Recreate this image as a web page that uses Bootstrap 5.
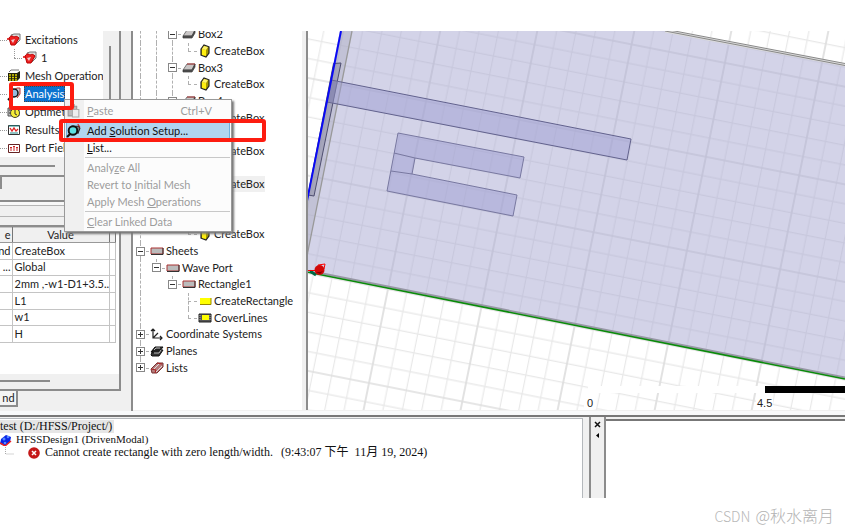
<!DOCTYPE html>
<html lang="en">
<head>
<meta charset="utf-8">
<meta name="viewport" content="width=device-width, initial-scale=1">
<title>HFSS Project</title>
<link href="https://cdn.jsdelivr.net/npm/bootstrap@5.3.0/dist/css/bootstrap.min.css" rel="stylesheet">
<style>
body{font-family:Lato,"Noto Sans CJK SC",sans-serif;font-size:11px;line-height:16px;color:#222;background:#fff;padding-top:31px;overflow-x:hidden}
ul{list-style:none;margin:0;padding:0}
.workspace{background:#f0f0f0;height:380px}
.side{width:133px;border-right:2px solid #8c8c8c;flex:none}
.side-top{height:171px;width:121px;border-right:2px solid #8c8c8c;border-bottom:2px solid #8c8c8c}
.project{height:126px}
.project ul{width:103px;background:#fff;overflow:hidden;height:100%;display:flex;flex-direction:column}
.project li,.model li{flex:1 1 0;min-height:0;display:flex;align-items:center;white-space:nowrap}
.project li a,.model li a{color:#222;text-decoration:none;padding:0 1px;line-height:16px}
.project li svg{width:14px;height:14px;flex:none;margin:0 3px 0 7px}
.project li.sub svg{margin-left:23px}
.project li{position:relative}
.project li::before{content:"";position:absolute;left:0;width:7px;top:50%;border-top:1px dotted #999}
.project li.sub::before{left:14px;width:8px}
.project li.sub::after{content:"";position:absolute;left:14px;top:0;height:50%;border-left:1px dotted #999}
.project li a.chosen{background:#0a72cf;color:#fff;outline:1px dotted #444;outline-offset:-1px}
.vthumb{width:2px;background:#8c8c8c;margin:15px 0 0 6px}
.hthumb{height:2px;background:#8c8c8c;width:55px;margin-top:8px}
.sheet-tab{height:14px;margin-top:8px;border-left:2px solid #8c8c8c;border-top:2px solid #8c8c8c}
.dock{height:23px;width:121px;border-right:2px solid #8c8c8c;background:linear-gradient(#f8f8f8 3px,#b5b5b5 3px,#b5b5b5 4px,#f0f0f0 4px,#f0f0f0 14px,#b5b5b5 14px,#b5b5b5 15px,#f0f0f0 15px)}
.props{width:121px;height:166px;border:solid #8c8c8c;border-width:2px 2px 2px 0;background:#fff;display:flex;flex-direction:column}
.props table{width:116px;height:116px;table-layout:fixed;border-collapse:collapse;line-height:14px;white-space:nowrap}
.props td,.props th{border:1px solid #c4c4c4;padding:0 2px;overflow:hidden;font-weight:400}
.props th{background:#f0f0f0;text-align:center;border-right:1px solid #777;border-bottom-color:#999}
.props th:first-child,.props td:first-child{border-left:0;text-align:right;padding:0 1px 0 0;direction:rtl}
.hbar{height:15px;background:#f0f0f0;margin-top:auto;padding-top:6px}
.hbar i{display:block;width:50px;height:2px;background:#8c8c8c}
.cmd-tab{width:18px;height:16px;line-height:14px;border:solid #8c8c8c;border-width:0 2px 2px 0;background:#f4f4f4;padding:0 0 0 1px;color:#222}
.model{width:175px;flex:none;background:linear-gradient(90deg,#fff 169px,#f0f0f0 169px);overflow:hidden;border-right:2px solid #8c8c8c;margin-bottom:1px}
.model ul{height:350px;margin-top:-5px;display:flex;flex-direction:column}
.cell{width:16px;flex:none;align-self:stretch;position:relative}
.line::before,.joint::before,.elbow::before{content:"";position:absolute;left:7px;top:0;bottom:0;border-left:1px dashed #b0b0b0}
.elbow::before{bottom:50%}
.joint::after,.elbow::after{content:"";position:absolute;left:7px;right:0;top:50%;border-top:1px dashed #b0b0b0}
.toggle{position:absolute;left:3px;top:4px;width:9px;height:9px;border:1px solid #888;background:#fff;padding:0;z-index:1}
.toggle::before{content:"";position:absolute;left:1px;right:1px;top:3px;height:1px;background:#333}
.toggle.plus::after{content:"";position:absolute;top:1px;bottom:1px;left:3px;width:1px;background:#333}
.model li svg{width:14px;height:14px;flex:none;margin:0 1px}
.model li a.soft{background:#f0f0f0}
.canvas3d{background:#fff;margin-bottom:1px;min-width:0}
.canvas3d svg{inset:0;width:100%;height:100%}
.menu{left:64px;top:68px;width:168px;background:linear-gradient(90deg,#f0f0f0 19px,#fcfcfc 19px);border:1px solid #999;box-shadow:2px 2px 2px #777;padding:2px 1px 1px;z-index:3}
.menu button{display:flex;width:100%;height:17px;border:0;background:none;padding:0 18px 0 21px;line-height:17px;color:#111;position:relative;white-space:nowrap}
.menu button:disabled{color:#9c9c9c}
.menu button.hot{margin-top:3px;background:#b0d5f0;box-shadow:inset 0 0 0 1px #6fb0dd}
.menu svg{position:absolute;left:0;top:1px;width:15px;height:15px}
.menu hr{margin:1px 0 1px 19px;border-top:1px solid #c8c8c8;opacity:1}
.callout{border:4px solid #fd1c10;border-radius:3px;z-index:4;pointer-events:none}
.mark-a{left:9px;top:51px;width:65px;height:28px}
.mark-b{left:59px;top:88px;width:207px;height:23px}
.messages{height:83px;background:#f0f0f0;border-top:2px solid #777;font-family:"Liberation Serif","Noto Sans CJK SC",serif;color:#111}
.log{flex:0 0 583px;background:#fff;border:solid #b4b8bc;border-width:1px 1px 0 0;margin-top:1px;font-size:12px;line-height:13px;padding-top:1px}
.log span{white-space:pre}
.log .design{font-size:11px}
.log .root{background:#e6e6e6;padding-right:2px;display:inline-block}
.log svg{width:12px;height:12px;flex:none}
.log .error{margin-left:12px;margin-right:5px}
.grip{width:23px;flex:none;border-right:2px solid #8c8c8c;padding-left:6px}
.grip div{border-left:2px solid #8c8c8c;height:100%;padding-left:1px}
.grip button{display:block;border:0;background:none;padding:0;width:11px;height:11px;line-height:0}
.grip svg{width:7px;height:7px}
.progress-pane{border-top:2px solid #777;margin-top:2px;background:#fff}
.credit{font:300 16px/24px "Noto Sans CJK SC",sans-serif;color:#b2b2b2;padding:5px 11px 0 0}
.credit span{color:#b8b8b8;font-size:14px;margin-right:5px}
</style>
</head>
<body>
<svg width="0" height="0" class="position-absolute">
<defs>
<symbol id="box" viewBox="0 0 14 14"><path d="M1 9 5 3h8l-3 6z" fill="#c9c6c6" stroke="#777"/><path d="M1 9v2h9l3-5V3l-3 6z" fill="#555" stroke="#333" stroke-width=".7"/><path d="M5 3h8" stroke="#a33"/></symbol>
<symbol id="make" viewBox="0 0 14 14"><path d="M3 5 6 1l5 2v6l-3 4-5-2z" fill="#a59800" stroke="#222" stroke-width="1.200"/><path d="m4 5 4 1v6l-4-1z" fill="#ffef10"/><path d="m4 5 2-3 4 1-2 3z" fill="#fff36a"/></symbol>
<symbol id="sheet" viewBox="0 0 14 14"><path d="M1 4h12v6H1z" fill="#bbb" stroke="#a33"/><path d="M1 10.500h12V4" fill="none" stroke="#333"/></symbol>
<symbol id="rect" viewBox="0 0 14 14"><path d="M2 4h11v6H2z" fill="#ff0"/><path d="M2 10.500h11V4" fill="none" stroke="#998800"/></symbol>
<symbol id="cover" viewBox="0 0 14 14"><path d="M1 3h12v8H1z" fill="#555" stroke="#222"/><path d="M4 4h7v5H4z" fill="#ff0"/><path d="M2 4v6M12 4v6" stroke="#aaa" stroke-dasharray="1 1"/></symbol>
<symbol id="axes" viewBox="0 0 14 14"><path d="M3 2v9h9M3 11l5-5M1 4l2-2 2 2M10 9l2 2-2 2" fill="none" stroke="#222" stroke-width="1.200"/></symbol>
<symbol id="planes" viewBox="0 0 14 14"><path d="m1 8 4-5h8L9 8zM1 11l2-5h10l-4 6H2z" fill="#333" stroke="#111"/><path d="m4 6 2-2h4M4 9h5l2-3" stroke="#bbb" fill="none"/></symbol>
<symbol id="lists" viewBox="0 0 14 14"><path d="m1 8 6-6h6v4l-6 6H2z" fill="#b67c7c" stroke="#733"/><path d="m3 9 6-6M6 11l6-6" stroke="#ddd"/><path d="m1 8 5 1-1 3M7 2l5 1" stroke="#a22" fill="none"/></symbol>
<symbol id="excite" viewBox="0 0 14 14"><path d="m4 2 3-1h6v6l-4 4-4-2z" fill="#ddd" stroke="#777"/><path d="M0 6h4" stroke="#d00" stroke-width="1.500"/><path d="M2 5c2-3 4-2 5-1 2-1 3-1 5 1l-4 7H4z" fill="#e22" stroke="#b00"/><path d="m4 7 4-1-2 4z" fill="#ecc"/></symbol>
<symbol id="mesh" viewBox="0 0 14 14"><path d="M1 4h9l3-2v7l-3 3H1z" fill="#221"/><path d="M2 6h2m1 0h2m1 0h2M2 8.500h2m1 0h2m1 0h2M2 11h2m1 0h2m1 0h2" stroke="#dcd000" stroke-width="1.500"/><path d="m2 3 2-2h8" stroke="#777" fill="none"/></symbol>
<symbol id="solve" viewBox="0 0 14 14"><path d="m7 3 3-2h3v6l-3 4" fill="#ccc" stroke="#b33"/><circle cx="7" cy="6" r="4" fill="#9bd" stroke="#111" stroke-width="1.500"/><path d="m1 13 4-4" stroke="#111" stroke-width="2"/></symbol>
<symbol id="setup" viewBox="0 0 14 14"><path d="M5 3h7l1 2-2 5" fill="#777" stroke="#222"/><circle cx="6.500" cy="7" r="4" fill="#5de1e4" stroke="#111" stroke-width="1.800"/><path d="m1 13 3-3" stroke="#111" stroke-width="2"/><path d="m11 1 2 3" stroke="#b22"/></symbol>
<symbol id="optim" viewBox="0 0 14 14"><path d="M1 3h11v8H1z" fill="#bbb" stroke="#555"/><circle cx="8" cy="8" r="4.500" fill="#f5ed39" stroke="#443"/><path d="M8 5v4l2 1M2 5h3M2 8h1" stroke="#333" fill="none"/></symbol>
<symbol id="results" viewBox="0 0 14 14"><path d="M1.500 2.500h11v9h-11z" fill="#fff" stroke="#333"/><path d="m3 5 2 3 2-3 2 3 2-2" fill="none" stroke="#d22" stroke-width="1.300"/><path d="M2 3h10M3 10h8" stroke="#288"/></symbol>
<symbol id="port" viewBox="0 0 14 14"><path d="M1.500 3.500h11v8h-11z" fill="#fff" stroke="#622"/><path d="M4 10V6m3 4V5m3 5V6M3 7l1-1 1 1m1-1 1-1 1 1m1 1 1-1 1 1" stroke="#c22" fill="none"/></symbol>
</defs>
</svg>

<main class="position-relative">
<div class="workspace d-flex">
  <aside class="side">
    <div class="side-top">
      <div class="project d-flex">
        <ul>
          <li><svg><use href="#excite"/></svg><a href="#">Excitations</a></li>
          <li class="sub"><svg><use href="#excite"/></svg><a href="#">1</a></li>
          <li><svg><use href="#mesh"/></svg><a href="#">Mesh Operations</a></li>
          <li><svg><use href="#solve"/></svg><a href="#" class="chosen">Analysis</a></li>
          <li><svg><use href="#optim"/></svg><a href="#">Optimetrics</a></li>
          <li><svg><use href="#results"/></svg><a href="#">Results</a></li>
          <li><svg><use href="#port"/></svg><a href="#">Port Field</a></li>
        </ul>
        <div class="vthumb"></div>
      </div>
      <div class="hthumb"></div>
      <div class="sheet-tab"></div>
    </div>
    <div class="dock"></div>
    <div class="props">
      <table>
        <colgroup><col style="width:12px"><col style="width:97px"><col></colgroup>
        <thead><tr><th>e</th><th>Value</th><th></th></tr></thead>
        <tbody>
          <tr><td>nd</td><td>CreateBox</td><td></td></tr>
          <tr><td>...</td><td>Global</td><td></td></tr>
          <tr><td></td><td>2mm ,-w1-D1+3.5...</td><td></td></tr>
          <tr><td></td><td>L1</td><td></td></tr>
          <tr><td></td><td>w1</td><td></td></tr>
          <tr><td></td><td>H</td><td></td></tr>
        </tbody>
      </table>
      <div class="hbar"><i></i></div>
    </div>
    <button type="button" class="cmd-tab d-block">nd</button>
  </aside>

  <nav class="model" aria-label="Model tree">
    <ul>
      <li><span class="cell line"></span><span class="cell line"></span><span class="cell joint"><button class="toggle" aria-label="Collapse"></button></span><svg><use href="#box"/></svg><a href="#">Box2</a></li>
      <li><span class="cell line"></span><span class="cell line"></span><span class="cell line"></span><span class="cell elbow"></span><svg><use href="#make"/></svg><a href="#">CreateBox</a></li>
      <li><span class="cell line"></span><span class="cell line"></span><span class="cell joint"><button class="toggle" aria-label="Collapse"></button></span><svg><use href="#box"/></svg><a href="#">Box3</a></li>
      <li><span class="cell line"></span><span class="cell line"></span><span class="cell line"></span><span class="cell elbow"></span><svg><use href="#make"/></svg><a href="#">CreateBox</a></li>
      <li><span class="cell line"></span><span class="cell line"></span><span class="cell joint"><button class="toggle" aria-label="Collapse"></button></span><svg><use href="#box"/></svg><a href="#">Box4</a></li>
      <li><span class="cell line"></span><span class="cell line"></span><span class="cell line"></span><span class="cell elbow"></span><svg><use href="#make"/></svg><a href="#">CreateBox</a></li>
      <li><span class="cell line"></span></li>
      <li><span class="cell line"></span><span class="cell line"></span><span class="cell line"></span><span class="cell elbow"></span><svg><use href="#make"/></svg><a href="#">CreateBox</a></li>
      <li><span class="cell line"></span></li>
      <li><span class="cell line"></span><span class="cell line"></span><span class="cell line"></span><span class="cell elbow"></span><svg><use href="#make"/></svg><a href="#" class="soft">CreateBox</a></li>
      <li><span class="cell line"></span></li>
      <li><span class="cell line"></span></li>
      <li><span class="cell line"></span><span class="cell"></span><span class="cell"></span><span class="cell elbow"></span><svg><use href="#make"/></svg><a href="#">CreateBox</a></li>
      <li><span class="cell joint"><button class="toggle" aria-label="Collapse"></button></span><svg><use href="#sheet"/></svg><a href="#">Sheets</a></li>
      <li><span class="cell line"></span><span class="cell elbow"><button class="toggle" aria-label="Collapse"></button></span><svg><use href="#sheet"/></svg><a href="#">Wave Port</a></li>
      <li><span class="cell line"></span><span class="cell"></span><span class="cell elbow"><button class="toggle" aria-label="Collapse"></button></span><svg><use href="#sheet"/></svg><a href="#">Rectangle1</a></li>
      <li><span class="cell line"></span><span class="cell"></span><span class="cell"></span><span class="cell joint"></span><svg><use href="#rect"/></svg><a href="#">CreateRectangle</a></li>
      <li><span class="cell line"></span><span class="cell"></span><span class="cell"></span><span class="cell elbow"></span><svg><use href="#cover"/></svg><a href="#">CoverLines</a></li>
      <li><span class="cell joint"><button class="toggle plus" aria-label="Expand"></button></span><svg><use href="#axes"/></svg><a href="#">Coordinate Systems</a></li>
      <li><span class="cell joint"><button class="toggle plus" aria-label="Expand"></button></span><svg><use href="#planes"/></svg><a href="#">Planes</a></li>
      <li><span class="cell elbow"><button class="toggle plus" aria-label="Expand"></button></span><svg><use href="#lists"/></svg><a href="#">Lists</a></li>
    </ul>
  </nav>

  <section class="canvas3d flex-grow-1 position-relative">
    <svg class="position-absolute" viewBox="308 31 537 379" preserveAspectRatio="xMinYMin slice">
      <defs>
        <pattern id="grid" width="100" height="100" patternUnits="userSpaceOnUse" patternTransform="matrix(.933 .185 -.19 .939 369 383)">
          <path d="M20 0v100M40 0v100M60 0v100M80 0v100M0 20h100M0 40h100M0 60h100M0 80h100" stroke="#e8e8e8" stroke-width="1.200"/>
          <path d="M0 0v100M100 0v100M0 0h100M0 100h100" stroke="#dedede" stroke-width="1.800"/>
        </pattern>
      </defs>
      <path d="M307 31h538v379H307z" fill="url(#grid)"/>
      <path d="M340 31h325l180 34v314L307 272v-71z" fill="#a7a7d1" fill-opacity=".5"/>
      <path d="M340 31h12l-45 225v-55z" fill="#aaaabb" fill-opacity=".4"/>
      <path d="m352 31-45 225" stroke="#999" stroke-width="1.300"/>
      <path d="m333.500 63.500 7.500-.5-27 133-6-1z" fill="#88889f" fill-opacity=".5" stroke="#4e4e70"/>
      <path d="m331 80 300 59-4 21-300-58z" fill="#9d9dd2" fill-opacity=".5" stroke="#62628d"/>
      <path d="m331 80 7 1-5 22-6-1z" fill="#77779f" fill-opacity=".5"/>
      <path d="m398 133 126 24-4 21-105-20-3 16 105 21-4 21-126-25zM394 153l21 5M391 171l21 3" fill="#9d9dd2" fill-opacity=".5" stroke="#7878a0"/>
      <path d="m341 31-34 170" stroke="#0808f5" stroke-width="2"/>
      <path d="m665 31 180 34" stroke="#ddd" stroke-width="3"/>
      <path d="m665 31 180 34.500M672 30.500l173 33" stroke="#888"/>
      <path d="m320 273 525 104.500" stroke="#9797a5" stroke-width="2"/>
      <path d="m307 272 538 107" stroke="#0a8a0a" stroke-width="1.600"/>
      <path d="m310 271 6 4" stroke="#064" stroke-width="3"/>
      <path d="M307 270.500h9M318 265l7-1-1 5" stroke="#f00" fill="none"/>
      <circle cx="319.500" cy="270" r="5" fill="#d10808"/><path d="m316 272 4 2 3-3-3 1z" fill="#800"/>
      <path d="M588 386h177v7H588z" fill="#fff"/><path d="M584 397h12v12h-12zM756 397h17v12h-17z" fill="#fff"/>
      <path d="M765 386h80v7h-80z"/>
      <g font-family="Liberation Sans,sans-serif" font-size="11" fill="#222"><text x="587" y="407">0</text><text x="757" y="407">4.5</text></g>
    </svg>
  </section>
</div>

<div class="menu position-absolute" role="menu">
  <button type="button" disabled><svg viewBox="0 0 14 14"><path d="M2 3h8v9H2z" fill="#bbb" stroke="#999"/><path d="M4 1h4v3H4z" fill="#888"/><path d="M6 6h6v7H6z" fill="#eee" stroke="#aaa"/></svg><span><u>P</u>aste</span><span class="ms-auto">Ctrl+V</span></button>
  <button type="button" class="hot"><svg><use href="#setup"/></svg><span>Add <u>S</u>olution Setup...</span></button>
  <button type="button"><span><u>L</u>ist...</span></button>
  <hr>
  <button type="button" disabled><span>Analy<u>z</u>e All</span></button>
  <button type="button" disabled><span>Revert to <u>I</u>nitial Mesh</span></button>
  <button type="button" disabled><span>Apply Mesh <u>O</u>perations</span></button>
  <hr>
  <button type="button" disabled><span><u>C</u>lear Linked Data</span></button>
</div>
<div class="callout mark-a position-absolute"></div>
<div class="callout mark-b position-absolute"></div>

<div class="bg-light pt-1"></div>
<div class="messages d-flex">
  <div class="log">
    <div><span class="root">test (D:/HFSS/Project/)</span></div>
    <div class="d-flex align-items-center"><svg viewBox="0 0 12 12"><path d="m1 5 5-4 5 2-1 5-5 4-5-2z" fill="#0825e8"/><path d="m0 9 5 3 6-5" stroke="#e22" stroke-width="1.500" fill="none"/><circle cx="4" cy="5" r="1.500" fill="#58f"/><circle cx="8" cy="3" r="1.300" fill="#58f"/><circle cx="5" cy="9" r="1.300" fill="#58f"/></svg><span class="ms-1 design">HFSSDesign1 (DrivenModal)</span></div>
    <div class="d-flex align-items-center"><svg viewBox="0 0 12 12" class="ms-1"><path d="M1.500 0v7H10" fill="none" stroke="#aaa" stroke-dasharray="1 1"/></svg><svg viewBox="0 0 12 12" class="error"><circle cx="6" cy="6" r="5.800" fill="#c41818"/><path d="m4 4 4 4m0-4L4 8" stroke="#fff" stroke-width="1.500"/></svg><span>Cannot create rectangle with zero length/width.</span><span class="ms-2">(9:43:07 下午  11月 19, 2024)</span></div>
  </div>
  <div class="grip"><div>
    <button type="button" aria-label="Close" class="pt-1"><svg viewBox="0 0 7 7"><path d="m1 1 5 5m0-5L1 6" stroke="#111" stroke-width="1.500"/></svg></button>
    <button type="button" aria-label="Collapse" class="pt-1"><svg viewBox="0 0 7 7"><path d="M5 1v5L2 3.500z"/></svg></button>
  </div></div>
  <div class="progress-pane flex-grow-1"></div>
</div>
</main>
<footer class="credit text-end"><span>CSDN</span>@秋水离月</footer>
<script src="https://cdn.jsdelivr.net/npm/bootstrap@5.3.0/dist/js/bootstrap.bundle.min.js"></script>
</body>
</html>
